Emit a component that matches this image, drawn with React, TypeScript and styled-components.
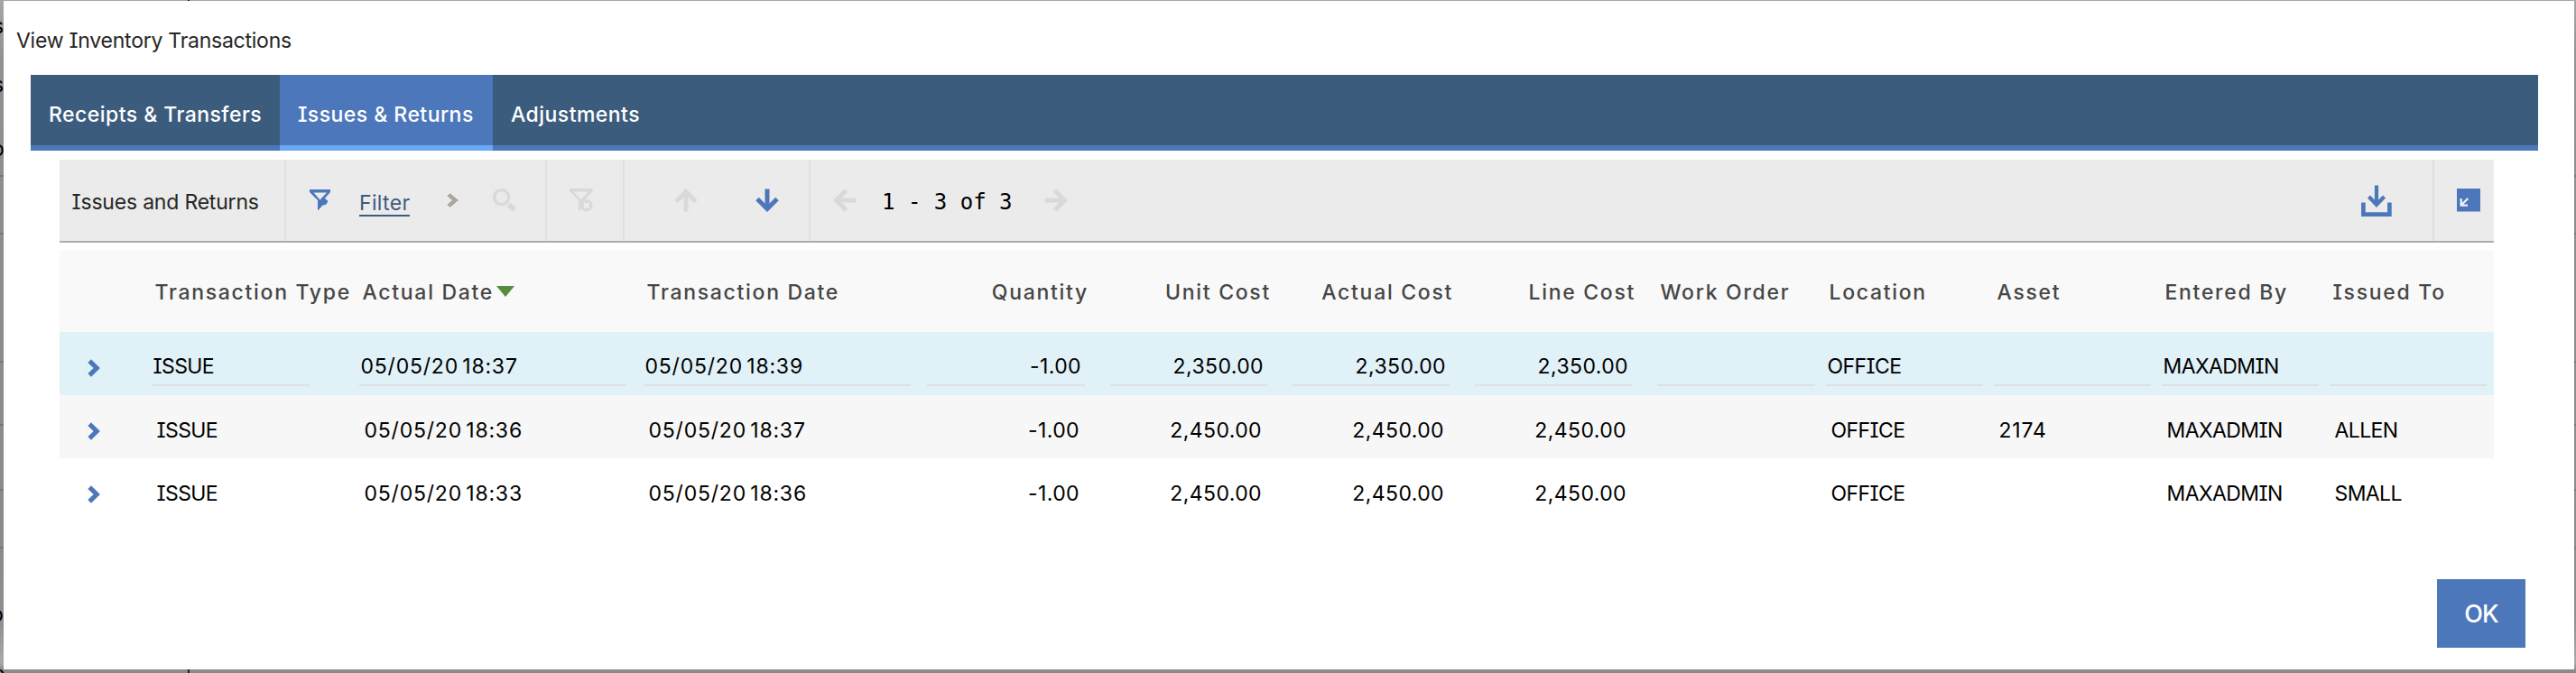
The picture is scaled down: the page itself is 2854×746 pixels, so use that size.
import React from "react";
import styled, { createGlobalStyle, css } from "styled-components";

const BLUE = "#4d77bb";
const FAINT = "#d9d9d9";

const GlobalStyle = createGlobalStyle`
  *, *::before, *::after { box-sizing: border-box; }
  body {
    margin: 0;
    background: #8f8f8f;
    font-family: Inter, Roboto, sans-serif;
    font-feature-settings: "cv08";
    font-size: 23px;
    line-height: 30px;
    color: #000;
  }
`;

/* The dimmed page that stays visible round the edges of the dialog. */
const Backdrop = styled.div`
  position: relative;
  height: 746px;
  padding: 1px 2px 4px 4px;
  overflow: hidden;
  background: linear-gradient(#a6a6a6 0, #929292 60px, #8f8e8e 180px, #8a8a8a 600px, #8f8f8f 690px, #a9a9a9 735px, #8b8b8b 742px);
`;

const PageRule = styled.div<{ $y: number }>`
  position: absolute;
  left: 0;
  right: 0;
  top: ${(p) => p.$y}px;
  height: 2px;
  background: #777;
`;

const PageDivider = styled.div`
  position: absolute;
  left: 208px;
  top: 0;
  bottom: 0;
  width: 2px;
  background: #1a2430;
`;

const PageLetter = styled.span<{ $y: number; $x?: number }>`
  position: absolute;
  left: ${(p) => p.$x ?? -8}px;
  top: ${(p) => p.$y}px;
  font-size: 23px;
  line-height: 24px;
`;

const Dialog = styled.section`
  position: relative;
  display: flex;
  flex-direction: column;
  height: 741px;
  background: #fff;
`;

const DialogTitle = styled.h1`
  margin: 0;
  height: 82px;
  padding: 29px 0 0 14px;
  font-size: 23px;
  font-weight: 400;
  line-height: 30px;
  letter-spacing: -0.25px;
  color: #262626;
`;

const TabBar = styled.nav`
  display: flex;
  height: 84px;
  margin: 0 40px 0 30px;
  background: #3c5c7e;
  box-shadow: inset 0 -6px ${BLUE};
`;

const Tab = styled.a<{ $width: number; $active?: boolean }>`
  width: ${(p) => p.$width}px;
  padding: 29px 0 0 20px;
  color: #fff;
  font-weight: 500;
  letter-spacing: 0.46px;
  white-space: nowrap;
  ${(p) =>
    p.$active &&
    css`
      background: ${BLUE};
      box-shadow: inset 0 -6px #69a8f5;
    `}
`;

const Toolbar = styled.div`
  display: flex;
  height: 92px;
  margin: 10px 89px 9px 62px;
  background: #ebebeb;
  border-bottom: 2px solid #adadad;
`;

const ToolGroup = styled.div<{ $width?: number; $pad: number }>`
  display: flex;
  align-items: center;
  flex: ${(p) => (p.$width ? `0 0 ${p.$width}px` : "1")};
  padding-left: ${(p) => p.$pad}px;
  & + & { border-left: 2px solid #dfdfdf; }
`;

const EndGroup = styled(ToolGroup)`
  justify-content: flex-end;
  padding-right: 45px;
  && { border-left: 0; }
`;

const ToolLabel = styled.span`
  padding-top: 3px;
  letter-spacing: -0.2px;
  color: #262626;
  white-space: nowrap;
`;

const FilterLink = styled.a`
  width: 56px;
  height: 28px;
  margin: 7px 41px 0 31px;
  border-bottom: 2px solid #3c5c7e;
  line-height: 27px;
  letter-spacing: 0.35px;
  color: #3c5c7e;
`;

const Pager = styled.span`
  width: 144px;
  margin: 3px 37px 0 28px;
  font: 24px/30px "DejaVu Sans Mono", monospace;
  white-space: nowrap;
`;

const Icon = styled.svg<{ $gap?: number; $lift?: number }>`
  display: block;
  flex: none;
  margin-left: ${(p) => p.$gap ?? 0}px;
  margin-bottom: ${(p) => p.$lift ?? 0}px;
  overflow: visible;
`;

const columns =
  "102px 230px 315px 314px 203px 202px 202px 202px 187px 186px 186px 186px 182px";

const Table = styled.div`
  margin: 0 89px 0 62px;
`;

const HeaderRow = styled.div`
  display: grid;
  grid-template-columns: ${columns};
  align-items: center;
  height: 90px;
  padding-top: 1px;
  background: #f9f9f9;
`;

const HeaderCell = styled.div<{ $num?: boolean }>`
  display: flex;
  align-items: center;
  justify-content: ${(p) => (p.$num ? "flex-end" : "flex-start")};
  padding: 0 ${(p) => (p.$num ? 24 : 0)}px 0 3.5px;
  font-weight: 500;
  letter-spacing: 1.7px;
  color: #464646;
  white-space: nowrap;
`;

const Row = styled.div<{ $tone: string }>`
  display: grid;
  grid-template-columns: ${columns};
  height: 70px;
  background: ${(p) => p.$tone};
`;

const Expander = styled.div`
  display: flex;
  align-items: center;
  padding: 10px 0 0 31px;
`;

type Kind = "text" | "date" | "num";
const tracking: Record<Kind, number> = { text: -0.6, date: 0.8, num: 0.4 };

const Cell = styled.div<{ $kind: Kind; $gap: number }>`
  height: 54px;
  margin: 7px ${(p) => p.$gap}px 0 0;
  padding: ${(p) => (p.$kind === "num" ? "17px 6px 0 0" : "17px 0 0 5.5px")};
  text-align: ${(p) => (p.$kind === "num" ? "right" : "left")};
  letter-spacing: ${(p) => tracking[p.$kind]}px;
  word-spacing: -3px;
  white-space: nowrap;
`;

const FieldCell = styled(Cell)`
  margin-top: 6px;
  padding: ${(p) => (p.$kind === "num" ? "17px 4px 0 0" : "17px 0 0 1.5px")};
  border-bottom: 2px solid #e0e0e0;
`;

const Footer = styled.footer`
  display: flex;
  justify-content: flex-end;
  margin-top: auto;
  padding: 0 54px 24px 0;
`;

const OkButton = styled.button`
  width: 98px;
  height: 76px;
  padding: 2px 0 0;
  border: 0;
  background: ${BLUE};
  color: #fff;
  font: 500 27px/74px Inter, sans-serif;
  letter-spacing: -1px;
`;

interface Column {
  title: string;
  kind: Kind;
  gap: number;
  sorted?: boolean;
}

const cols: Column[] = [
  { title: "Transaction Type", kind: "text", gap: 55 },
  { title: "Actual Date", kind: "date", gap: 19, sorted: true },
  { title: "Transaction Date", kind: "date", gap: 18 },
  { title: "Quantity", kind: "num", gap: 28 },
  { title: "Unit Cost", kind: "num", gap: 28 },
  { title: "Actual Cost", kind: "num", gap: 28 },
  { title: "Line Cost", kind: "num", gap: 28 },
  { title: "Work Order", kind: "text", gap: 12 },
  { title: "Location", kind: "text", gap: 12 },
  { title: "Asset", kind: "date", gap: 12 },
  { title: "Entered By", kind: "text", gap: 12 },
  { title: "Issued To", kind: "text", gap: 8 },
];

const data: string[][] = [
  ["ISSUE", "05/05/20 18:37", "05/05/20 18:39", "-1.00", "2,350.00", "2,350.00", "2,350.00", "", "OFFICE", "", "MAXADMIN", ""],
  ["ISSUE", "05/05/20 18:36", "05/05/20 18:37", "-1.00", "2,450.00", "2,450.00", "2,450.00", "", "OFFICE", "2174", "MAXADMIN", "ALLEN"],
  ["ISSUE", "05/05/20 18:33", "05/05/20 18:36", "-1.00", "2,450.00", "2,450.00", "2,450.00", "", "OFFICE", "", "MAXADMIN", "SMALL"],
];
const tones = ["#e0f1f8", "#f7f7f7", "#ffffff"];

const Chevron = ({ color, w, h }: { color: string; w: number; h: number }) => (
  <Icon width={w} height={h} viewBox="0 0 13 19" preserveAspectRatio="none">
    <path d="M2 2 L9.5 9.5 L2 17" fill="none" stroke={color} strokeWidth="4.8" />
  </Icon>
);

const Arrow = ({ color, turn, gap }: { color: string; turn: number; gap: number }) => (
  <Icon width="26" height="26" viewBox="0 0 26 26" $gap={gap}>
    <g transform={`rotate(${turn} 13 13)`} fill="none" stroke={color} strokeWidth="5">
      <path d="M13 25.5 V4" />
      <path d="M2 14.5 L13 3.5 L24 14.5" />
    </g>
  </Icon>
);

export default function App() {
  return (
    <>
      <GlobalStyle />
      <Backdrop>
        {[194, 258, 400, 470, 542, 606].map((y) => (
          <PageRule key={y} $y={y} />
        ))}
        <PageDivider />
        <PageLetter $y={17}>s</PageLetter>
        <PageLetter $y={82}>s</PageLetter>
        <PageLetter $y={153} $x={-9}>o</PageLetter>
        <PageLetter $y={669} $x={-10}>o</PageLetter>
        <PageLetter $y={735} $x={-8}>o</PageLetter>

        <Dialog>
          <DialogTitle>View Inventory Transactions</DialogTitle>

          <TabBar>
            <Tab $width={276}>Receipts &amp; Transfers</Tab>
            <Tab $width={236} $active>Issues &amp; Returns</Tab>
            <Tab $width={200}>Adjustments</Tab>
          </TabBar>

          <Toolbar>
            <ToolGroup $width={249} $pad={13.5}>
              <ToolLabel>Issues and Returns</ToolLabel>
            </ToolGroup>

            <ToolGroup $width={289} $pad={26}>
              <Icon width="24" height="24" viewBox="0 0 24 24">
                <path d="M0 0 H23 V3 L15 12 V17 L9 23.5 V12 L0 3 Z M4.5 3.6 L11.5 11.4 L19 3.6 Z" fill={BLUE} fillRule="evenodd" />
                <path d="M16 9 L20.5 13 L18 17 L13 17.5 L11.5 14.5 Z" fill={BLUE} />
              </Icon>
              <FilterLink>Filter</FilterLink>
              <Chevron color="#aaa699" w={13} h={16} />
              <Icon width="26" height="26" viewBox="0 0 26 26" $gap={38}>
                <circle cx="9.6" cy="9.6" r="8" fill="none" stroke={FAINT} strokeWidth="3.4" />
                <path d="M17.5 17.5 L24 24" stroke={FAINT} strokeWidth="6" />
              </Icon>
            </ToolGroup>

            <ToolGroup $width={86} $pad={25}>
              <Icon width="26" height="26" viewBox="0 0 26 26">
                <path d="M0 0 H25.5 V3 L17 12 V18 L10 25.5 V13 L0 3 Z M4.5 3.4 L12.8 12 L21 3.4 Z" fill={FAINT} fillRule="evenodd" />
                <circle cx="18.8" cy="18.8" r="6.8" fill={FAINT} />
                <path d="M16 16 L21.6 21.6 M21.6 16 L16 21.6" stroke="#f2f2f2" strokeWidth="2" />
              </Icon>
            </ToolGroup>

            <ToolGroup $width={206} $pad={55}>
              <Arrow color={FAINT} turn={0} gap={0} />
              <Arrow color={BLUE} turn={180} gap={64} />
            </ToolGroup>

            <ToolGroup $width={400} $pad={25}>
              <Arrow color={FAINT} turn={-90} gap={0} />
              <Pager>1 - 3 of 3</Pager>
              <Arrow color={FAINT} turn={90} gap={-1} />
            </ToolGroup>

            <EndGroup $pad={0}>
              <Icon width="34" height="35" viewBox="0 0 34 35">
                <path d="M17 0.5 V21 M8.5 13 L17 22 L25.5 13" fill="none" stroke={BLUE} strokeWidth="4.2" />
                <path d="M2.4 19.5 V32.6 H31.4 V19.5" fill="none" stroke={BLUE} strokeWidth="4.6" />
              </Icon>
            </EndGroup>

            <ToolGroup $width={68} $pad={25}>
              <Icon width="26" height="26" viewBox="0 0 26 26">
                <rect width="26" height="25.5" fill={BLUE} />
                <path d="M4.7 11 V18.7 H12 M5 18.3 L12.3 11" fill="none" stroke="#eef1f6" strokeWidth="2.3" />
              </Icon>
            </ToolGroup>
          </Toolbar>

          <Table>
            <HeaderRow>
              <span />
              {cols.map((c) => (
                <HeaderCell key={c.title} $num={c.kind === "num"}>
                  {c.title}
                  {c.sorted && (
                    <Icon width="20" height="12" viewBox="0 0 20 12" $gap={3} $lift={2}>
                      <path d="M0 0 H20 L10 12 Z" fill="#568c3b" />
                    </Icon>
                  )}
                </HeaderCell>
              ))}
            </HeaderRow>
            {data.map((row, r) => {
              const Box = r === 0 ? FieldCell : Cell;
              return (
                <Row key={r} $tone={tones[r]}>
                  <Expander>
                    <Chevron color={BLUE} w={14} h={20} />
                  </Expander>
                  {row.map((value, i) => (
                    <Box key={i} $kind={cols[i].kind} $gap={cols[i].gap}>
                      {value}
                    </Box>
                  ))}
                </Row>
              );
            })}
          </Table>

          <Footer>
            <OkButton>OK</OkButton>
          </Footer>
        </Dialog>
      </Backdrop>
    </>
  );
}
